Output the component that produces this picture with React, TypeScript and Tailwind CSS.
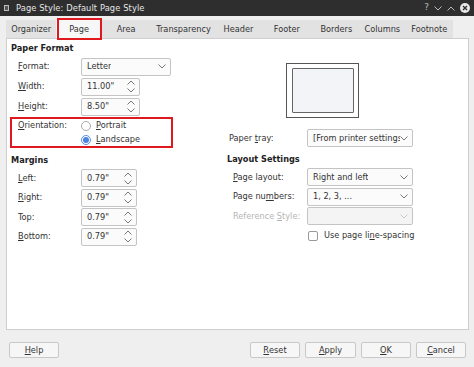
import React from "react";

const F = { fontFamily: '"DejaVu Sans", sans-serif' };

function U({ t, i }: { t: string; i: number }) {
  return (
    <>
      {t.slice(0, i)}
      <span className="underline underline-offset-[1px]">{t[i]}</span>
      {t.slice(i + 1)}
    </>
  );
}

function ChevDown({ c = "#777" }: { c?: string }) {
  return (
    <svg width="8" height="5" viewBox="0 0 8 5" className="shrink-0">
      <path d="M0.5 0.5 L4 4 L7.5 0.5" fill="none" stroke={c} strokeWidth="1" />
    </svg>
  );
}

function Spin() {
  return (
    <svg width="8" height="13" viewBox="0 0 8 13" className="shrink-0">
      <path d="M0.5 4.5 L4 1 L7.5 4.5" fill="none" stroke="#777" strokeWidth="1" />
      <path d="M0.5 8.5 L4 12 L7.5 8.5" fill="none" stroke="#777" strokeWidth="1" />
    </svg>
  );
}

function Select({ w, text, disabled }: { w: string; text: string; disabled?: boolean }) {
  return (
    <div
      className={`${w} h-[18px] flex items-center justify-between pl-[5px] pr-[4px] border border-[#c4c4c4] rounded-[2px] ${disabled ? "bg-[#f4f4f4]" : "bg-[#fbfbfb]"}`}
    >
      <span className="whitespace-nowrap overflow-hidden">{text}</span>
      <ChevDown c={disabled ? "#c8c8c8" : "#777"} />
    </div>
  );
}

function SpinBox({ w, text }: { w: string; text: string }) {
  return (
    <div className={`${w} h-[18px] flex items-center justify-between pl-[5px] pr-[4px] border border-[#c4c4c4] rounded-[2px] bg-[#fbfbfb]`}>
      <span>{text}</span>
      <Spin />
    </div>
  );
}

function Btn({ children, w = "w-[50px]" }: { children: React.ReactNode; w?: string }) {
  return (
    <div className={`${w} h-[16px] flex items-center justify-center border border-[#c8c8c8] rounded-[2px] bg-[#f6f6f6] text-[#333]`}>
      {children}
    </div>
  );
}

export default function App() {
  const tabs = ["Organizer", "Page", "Area", "Transparency", "Header", "Footer", "Borders", "Columns", "Footnote"];
  const tabW = ["w-[51px]", "w-[46px]", "w-[49px]", "w-[67px]", "w-[44px]", "w-[54px]", "w-[46px]", "w-[47px]", "w-[48px]"];
  return (
    <div style={F} className="w-[474px] h-[367px] bg-[#efefef] flex flex-col text-[8.2px] text-[#333] overflow-hidden">
      {/* title bar */}
      <div className="h-[16px] bg-[#2e2e2e] flex items-center justify-between px-[4px] text-[#e6e6e6]">
        <div className="flex items-center gap-[7px]">
          <div className="w-[5px] h-[6px] border border-[#bbb] bg-[#555]" />
          <span className="text-[8.3px] tracking-[0.1px]">Page Style: Default Page Style</span>
        </div>
        <div className="flex items-center gap-[5px] text-[#bbb]">
          <span className="text-[9px]">?</span>
          <ChevDown c="#bbb" />
          <svg width="8" height="5" viewBox="0 0 8 5"><path d="M0.5 4.5 L4 1 L7.5 4.5" fill="none" stroke="#bbb" strokeWidth="1" /></svg>
          <div className="w-[10px] h-[10px] rounded-full bg-[#e8e8e8] flex items-center justify-center">
            <svg width="6" height="6" viewBox="0 0 6 6"><path d="M1 1 L5 5 M5 1 L1 5" stroke="#2e2e2e" strokeWidth="1.4" /></svg>
          </div>
        </div>
      </div>

      {/* tabs */}
      <div className="mt-[4px] ml-[6px] h-[18px] w-[447px] bg-[#e2e2e2] flex items-center relative">
        {tabs.map((t, i) => (
          <div key={t} className={`${tabW[i]} h-full flex items-center justify-center ${i === 1 ? "bg-[#f7f7f7]" : ""}`}>
            {t}
          </div>
        ))}
        <div className="absolute left-[51px] top-[-2px] w-[45px] h-[22px] border-2 border-[#e0191f]" />
      </div>

      {/* panel */}
      <div className="ml-[6px] w-[463px] h-[292px] bg-white border border-[#cfcfcf] flex">
        {/* left column */}
        <div className="w-[214px] flex flex-col pl-[4px]">
          <div className="mt-[3px] h-[12px] font-bold text-[#222] flex items-center">Paper Format</div>
          <div className="mt-[3px] flex flex-col gap-[1px] pl-[7px]">
            <div className="flex items-center h-[19px]">
              <span className="w-[63px]"><U t="Format:" i={0} /></span>
              <Select w="w-[90px]" text="Letter" />
            </div>
            <div className="flex items-center h-[19px]">
              <span className="w-[63px]"><U t="Width:" i={0} /></span>
              <SpinBox w="w-[59px]" text={'11.00"'} />
            </div>
            <div className="flex items-center h-[19px]">
              <span className="w-[63px]"><U t="Height:" i={0} /></span>
              <SpinBox w="w-[59px]" text={'8.50"'} />
            </div>
          </div>
          <div className="mt-[1px] ml-[-1px] w-[163px] h-[31px] border-2 border-[#e0191f] flex flex-col justify-center pl-[6px]">
            <div className="flex items-center h-[14px]">
              <span className="w-[63px]"><U t="Orientation:" i={0} /></span>
              <div className="w-[10px] h-[10px] rounded-full border border-[#aaa] bg-white" />
              <span className="ml-[5px]"><U t="Portrait" i={0} /></span>
            </div>
            <div className="flex items-center h-[14px] mt-[1px]">
              <span className="w-[63px]" />
              <div className="w-[10px] h-[10px] rounded-full border border-[#5b8ee6] bg-white flex items-center justify-center">
                <div className="w-[6px] h-[6px] rounded-full bg-[#4a84e0]" />
              </div>
              <span className="ml-[5px]"><U t="Landscape" i={0} /></span>
            </div>
          </div>
          <div className="mt-[6px] h-[12px] font-bold text-[#222] flex items-center">Margins</div>
          <div className="mt-[3px] flex flex-col gap-[1.5px] pl-[7px]">
            {[
              ["Left:", 0],
              ["Right:", 0],
              ["Top:", -1],
              ["Bottom:", 0],
            ].map(([l, i]) => (
              <div key={l as string} className="flex items-center h-[18px]">
                <span className="w-[63px]">{(i as number) >= 0 ? <U t={l as string} i={i as number} /> : l}</span>
                <SpinBox w="w-[56px]" text={'0.79"'} />
              </div>
            ))}
          </div>
        </div>

        {/* right column */}
        <div className="flex-1 flex flex-col">
          <div className="mt-[24px] ml-[65px] w-[73px] h-[55px] border border-[#555] flex items-center justify-center bg-white">
            <div className="w-[62px] h-[45px] border border-[#666] bg-[#f3f4f8] rounded-[1px]" />
          </div>
          <div className="mt-[11px] flex items-center h-[18px] pl-[8px]">
            <span className="w-[78px]"><U t="Paper tray:" i={6} /></span>
            <Select w="w-[106px]" text="[From printer settings]" />
          </div>
          <div className="mt-[6px] h-[12px] font-bold text-[#222] pl-[6px] flex items-center">Layout Settings</div>
          <div className="mt-[3px] flex flex-col gap-[1.5px] pl-[12px]">
            <div className="flex items-center h-[18px]">
              <span className="w-[74px]"><U t="Page layout:" i={0} /></span>
              <Select w="w-[106px]" text="Right and left" />
            </div>
            <div className="flex items-center h-[18px]">
              <span className="w-[74px]"><U t="Page numbers:" i={7} /></span>
              <Select w="w-[106px]" text="1, 2, 3, ..." />
            </div>
            <div className="flex items-center h-[18px] text-[#b4b4b4]">
              <span className="w-[74px] whitespace-nowrap"><U t="Reference Style:" i={10} /></span>
              <Select w="w-[106px]" text="" disabled />
            </div>
            <div className="flex items-center h-[18px]">
              <span className="w-[75px]" />
              <div className="w-[10px] h-[10px] border border-[#999] rounded-[2px] bg-white" />
              <span className="ml-[6px]"><U t="Use page line-spacing" i={11} /></span>
            </div>
          </div>
        </div>
      </div>

      {/* buttons */}
      <div className="mt-[12px] flex items-center px-[9px]">
        <Btn><U t="Help" i={0} /></Btn>
        <div className="flex-1" />
        <div className="flex gap-[5px] mr-[-1px]">
          <Btn><U t="Reset" i={0} /></Btn>
          <Btn w="w-[51px]"><U t="Apply" i={0} /></Btn>
          <Btn><U t="OK" i={0} /></Btn>
          <Btn><U t="Cancel" i={0} /></Btn>
        </div>
      </div>
    </div>
  );
}
